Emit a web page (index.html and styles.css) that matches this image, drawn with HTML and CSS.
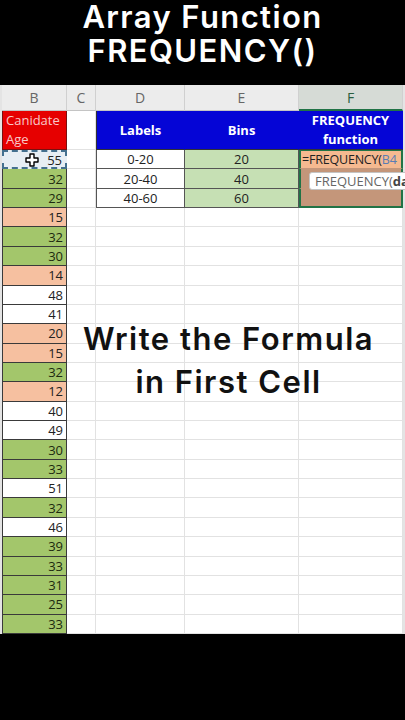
FILE: index.html
```html
<!DOCTYPE html>
<html lang="en">
<head>
    <meta charset="UTF-8">
    <meta name="viewport" content="width=device-width, initial-scale=1.0">
    <title>Array Function FREQUENCY()</title>
    <link rel="stylesheet" href="styles.css">
</head>
<body>
    <header class="title">
        <h1>Array Function<br>FREQUENCY()</h1>
    </header>
    <main class="sheet">
        <div class="grid" id="grid">
            <div class="cell edge"></div>
            <div class="cell col-head">B</div>
            <div class="cell col-head">C</div>
            <div class="cell col-head">D</div>
            <div class="cell col-head">E</div>
            <div class="cell col-head active">F</div>
            <div class="cell edge"></div>

            <div class="cell edge"></div>
            <div class="cell name">Canidate Age</div>
            <div class="cell"></div>
            <div class="cell band first">Labels</div>
            <div class="cell band">Bins</div>
            <div class="cell band">FREQUENCY function</div>
            <div class="cell edge"></div>
        </div>
        <div class="tooltip">FREQUENCY(<b>data</b></div>
        <p class="caption">Write the Formula<br>in First Cell</p>
    </main>
    <footer class="bottom"></footer>
    <script>
        const ages = [55, 32, 29, 15, 32, 30, 14, 48, 41, 20, 15, 32, 12, 40, 49, 30, 33, 51, 32, 46, 39, 33, 31, 25, 33];
        // s = selected, g = green, o = orange, w = white
        const tones = 'sggoggowwoogowwggwgwggggg';
        const labels = ['0-20', '20-40', '40-60'];
        const bins = [20, 40, 60];
        const cross = '<svg class="cross" width="14" height="14" viewBox="0 0 14 14"><path d="M5 1h4v4h4v4h-4v4h-4v-4h-4v-4h4z" fill="#fff" stroke="#000" stroke-width="1.4" stroke-linejoin="round"/></svg>';

        let html = '';
        ages.forEach((age, i) => {
            const tone = tones[i];
            html += '<div class="cell edge"></div>';
            html += `<div class="cell age ${tone}">${tone === 's' ? cross : ''}${age}</div>`;
            html += '<div class="cell"></div>';
            if (i < 3) {
                html += `<div class="cell lab">${labels[i]}</div>`;
                html += `<div class="cell bin">${bins[i]}</div>`;
                if (i === 0) {
                    html += '<div class="cell fx pick top">=FREQUENCY(<span class="ref">B4</span></div>';
                } else {
                    html += `<div class="cell fx-dim pick${i === 2 ? ' end' : ''}"></div>`;
                }
            } else {
                html += '<div class="cell"></div><div class="cell"></div><div class="cell"></div>';
            }
            html += '<div class="cell edge"></div>';
        });
        document.getElementById('grid').insertAdjacentHTML('beforeend', html);
    </script>
</body>
</html>
```

FILE: styles.css
```css
body {
    margin: 0;
    padding: 0;
    width: 405px;
    height: 720px;
    overflow: hidden;
    background-color: #000;
    font-family: 'Open Sans', sans-serif;
}
.title {
    display: flow-root;
    height: 85px;
}
.title h1 {
    margin: 0;
    color: #fff;
    font-family: 'Inter', sans-serif;
    font-weight: 600;
    font-size: 31px;
    line-height: 34px;
    letter-spacing: 1.4px;
    text-align: center;
}
.sheet {
    position: relative;
    height: 549px;
    background: #fff;
    overflow: hidden;
}
.grid {
    display: grid;
    grid-template-columns: 2px 65px 29px 89px 114px 104px 2px;
    grid-template-rows: 26px 39px repeat(25, 19.36px);
}
.cell {
    box-sizing: border-box;
    display: flex;
    align-items: center;
    padding: 0 3px;
    border-right: 1px solid #e2e2e2;
    border-bottom: 1px solid #e2e2e2;
    font-size: 13px;
    color: #222;
    white-space: nowrap;
    overflow: hidden;
}
.edge {
    padding: 0;
    border: none;
    background: #e4e4e4;
}
.col-head {
    justify-content: center;
    background: #ececec;
    color: #666;
    font-size: 14px;
    border-right-color: #d0d0d0;
    border-bottom-color: #c4c4c4;
}
.col-head.active {
    background: #d6dbd6;
    color: #2b5e3f;
    border-bottom: 2px solid #217346;
}
.name {
    align-items: flex-start;
    padding: 0 3px;
    white-space: normal;
    background: #e60000;
    color: #f8c8c8;
    font-size: 13px;
    line-height: 19px;
    border: 1px solid #7a1010;
    border-top: none;
}
.band {
    justify-content: center;
    text-align: center;
    white-space: normal;
    background: #0505d6;
    color: #fff;
    font-weight: 700;
    font-size: 13px;
    line-height: 19px;
    border-right-color: #0505d6;
    border-bottom-color: #333;
}
.band.first {
    border-left: 1px solid #333;
}
.age {
    justify-content: flex-end;
    border-left: 1px solid #3a3a3a;
    border-right-color: #3a3a3a;
    border-bottom-color: #3a3a3a;
}
.age.g { background: #a3c66b; color: #1d2a10; }
.age.o { background: #f6c0a0; }
.age.w { background: #fff; }
.age.s {
    background: #e7eef4;
    border: 2px dashed #44708f;
}
.cross {
    margin: 0 auto 0 18px;
}
.lab, .bin {
    justify-content: center;
    border-right-color: #555;
    border-bottom-color: #555;
}
.lab {
    border-left: 1px solid #555;
}
.bin {
    background: #c6e0b4;
}
.fx {
    padding: 0 1px;
    background: #f5b990;
    font-size: 12.5px;
    letter-spacing: -0.2px;
}
.ref {
    color: #5a7db5;
}
.fx-dim {
    background: #c4967a;
}
.pick {
    border-left: 2px solid #217346;
    border-right: 2px solid #217346;
    border-bottom-color: #c4967a;
}
.pick.top {
    border-top: 1px solid #217346;
}
.pick.end {
    border-bottom: 2px solid #217346;
}
.tooltip {
    position: absolute;
    left: 309px;
    top: 87px;
    height: 18px;
    box-sizing: border-box;
    padding: 0 5px;
    background: #fff;
    border: 1px solid #c4c4c4;
    border-radius: 3px;
    font-size: 13px;
    line-height: 16px;
    color: #666;
    white-space: nowrap;
}
.tooltip b {
    color: #444;
}
.caption {
    position: absolute;
    top: 232px;
    left: 52px;
    right: 0;
    margin: 0;
    text-align: center;
    font-family: 'Inter', sans-serif;
    font-weight: 600;
    font-size: 31px;
    line-height: 43px;
    letter-spacing: 1.5px;
    color: #111;
}
.bottom {
    height: 86px;
}
```
